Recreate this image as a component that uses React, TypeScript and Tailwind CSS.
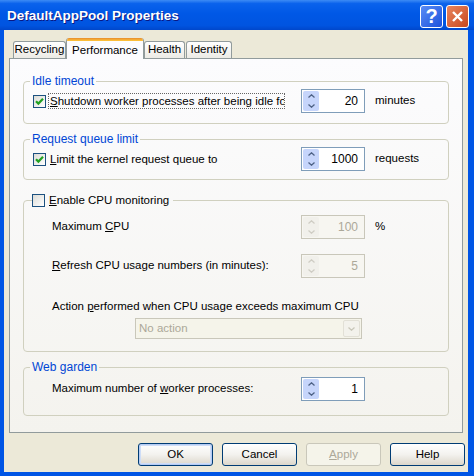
import React from 'react'

const FONT = "font-['Liberation_Sans',Arial,sans-serif]"

function Chevron({ dir, color }: { dir: 'up' | 'down'; color: string }) {
  return (
    <svg width="7" height="4" viewBox="0 0 7 4">
      {dir === 'up'
        ? <path d="M0.5 3.5 L3.5 0.8 L6.5 3.5" stroke={color} strokeWidth="1.3" fill="none" />
        : <path d="M0.5 0.5 L3.5 3.2 L6.5 0.5" stroke={color} strokeWidth="1.3" fill="none" />}
    </svg>
  )
}

function Check({ checked }: { checked?: boolean }) {
  return (
    <span className="w-[13px] h-[13px] shrink-0 border border-[#1C5180] bg-linear-to-br from-[#DCDCD7] to-white flex items-center justify-center">
      {checked && (
        <svg width="9" height="9" viewBox="0 0 9 9">
          <path d="M1 4.2 L3.4 6.6 L8 1.8" stroke="#21A121" strokeWidth="2.2" fill="none" />
        </svg>
      )}
    </span>
  )
}

function Spinner({ value, disabled }: { value: string; disabled?: boolean }) {
  return (
    <div
      className={`w-[64px] h-[24px] shrink-0 border flex ${
        disabled ? 'border-[#C9C7BA] bg-[#F7F6F1]' : 'border-[#7F9DB9] bg-white'
      }`}
    >
      <div className="w-[18px] p-px">
        <div
          className={`h-full rounded-[2px] flex flex-col items-center justify-center gap-[6px] ${
            disabled ? 'bg-[#F1F0EB]' : 'bg-[#C6D5FB]'
          }`}
        >
          <Chevron dir="up" color={disabled ? '#CFCDC4' : '#4D6185'} />
          <Chevron dir="down" color={disabled ? '#CFCDC4' : '#4D6185'} />
        </div>
      </div>
      <div className={`flex-1 self-center text-right pr-[6px] text-[12px] ${disabled ? 'text-[#ACA899]' : 'text-black'}`}>
        {value}
      </div>
    </div>
  )
}

function Group({ legend, className, children }: { legend: React.ReactNode; className?: string; children: React.ReactNode }) {
  return (
    <fieldset className={`border border-[#D0D0BF] rounded-[4px] ${className ?? ''}`}>
      <legend className="ml-[6px] px-[2px] leading-[14px] text-[12px] text-[#0046D5]">{legend}</legend>
      {children}
    </fieldset>
  )
}

function Tab({ label, selected, className }: { label: string; selected?: boolean; className?: string }) {
  if (selected) {
    return (
      <div className={`relative z-10 -mb-px h-[21px] flex flex-col rounded-t-[3px] border-x border-[#919B9C] bg-[#FCFCFE] overflow-hidden ${className ?? ''}`}>
        <div className="h-[3px] bg-linear-to-b from-[#E68B2C] to-[#FFC83C]" />
        <div className="flex-1 flex items-start justify-center pt-[1px]">{label}</div>
      </div>
    )
  }
  return (
    <div className={`h-[17px] rounded-t-[3px] border-x border-t border-[#919B9C] bg-linear-to-b from-white to-[#ECEBE5] flex items-center justify-center ${className ?? ''}`}>
      {label}
    </div>
  )
}

function Button({ children, primary, disabled }: { children: React.ReactNode; primary?: boolean; disabled?: boolean }) {
  return (
    <div
      className={`w-[75px] h-[23px] rounded-[3px] border flex items-center justify-center ${
        disabled
          ? 'border-[#C9C7BA] bg-[#F5F4EA] text-[#ACA899]'
          : 'border-[#003C74] bg-linear-to-b from-white via-[#F3F2EE] to-[#DCD7CB] text-black'
      } ${primary ? 'shadow-[inset_0_0_0_1px_#B6CCF3,inset_0_0_0_2px_#CEDDF7]' : ''}`}
    >
      {children}
    </div>
  )
}

export default function App() {
  return (
    <div className={`${FONT} text-[11.5px] w-[474px] h-[476px] flex flex-col bg-[#0055E5] select-none`}>
      {/* Title bar */}
      <div className="h-[30px] shrink-0 flex items-center bg-[linear-gradient(180deg,#3D8BF5_0%,#0A62EC_12%,#0058E6_45%,#0054E0_85%,#0047CB_100%)]">
        <div className="flex-1 pl-[7px] pt-[2px] text-white font-bold text-[13.5px] [text-shadow:1px_1px_#0A1883]">
          DefaultAppPool Properties
        </div>
        <div className="flex gap-[3px] pr-[5px] pt-[2px]">
          <div className="w-[23px] h-[23px] rounded-[3px] border border-white bg-linear-to-br from-[#5A8CF5] to-[#1C50DC] flex items-center justify-center text-white font-bold text-[20px] leading-none">
            ?
          </div>
          <div className="w-[23px] h-[23px] rounded-[3px] border border-white bg-linear-to-br from-[#E8855E] to-[#C8461A] flex items-center justify-center">
            <svg width="13" height="13" viewBox="0 0 13 13">
              <path d="M2 2 L11 11 M11 2 L2 11" stroke="white" strokeWidth="2.4" />
            </svg>
          </div>
        </div>
      </div>

      {/* Body */}
      <div className="flex-1 ml-[4px] mr-[6px] mb-[4px] bg-[#ECE9D8] flex flex-col pt-[8px] pb-[6px]">
        <div className="px-[5px]">
          <div className="flex items-end h-[20px] pl-[4px]">
            <Tab label="Recycling" className="w-[53px]" />
            <Tab label="Performance" selected className="w-[78px]" />
            <Tab label="Health" className="w-[41px]" />
            <Tab label="Identity" className="ml-[1px] w-[46px]" />
          </div>

          <div className="h-[375px] border border-[#919B9C] bg-linear-to-b from-[#FCFCFE] to-[#F4F3EE] px-[13px] pt-[15px]">
            <Group legend="Idle timeout">
              <div className="flex items-center pl-[9px] pt-[1px] pb-[10px]">
                <div className="w-[268px] flex items-center">
                  <Check checked />
                  <div className="ml-[2px] w-[237px] px-[1px] border border-dotted border-[#666] overflow-hidden whitespace-nowrap leading-[14px]">
                    <span className="underline">S</span>hutdown worker processes after being idle for
                  </div>
                </div>
                <Spinner value="20" />
                <span className="ml-[10px]">minutes</span>
              </div>
            </Group>

            <Group legend="Request queue limit" className="mt-[8px]">
              <div className="flex items-center pl-[9px] pt-[1px] pb-[8px]">
                <div className="w-[268px] flex items-center">
                  <Check checked />
                  <div className="ml-[2px] px-[1px] border border-transparent leading-[14px] whitespace-nowrap">
                    <span className="underline">L</span>imit the kernel request queue to
                  </div>
                </div>
                <Spinner value="1000" />
                <span className="ml-[10px]">requests</span>
              </div>
            </Group>

            <fieldset className="mt-[13px] border border-[#D0D0BF] rounded-[4px]">
              <legend className="ml-[8px] pr-[4px] leading-[14px] flex items-center gap-[4px]">
                <Check />
                <span>
                  <span className="underline">E</span>nable CPU monitoring
                </span>
              </legend>
              <div className="pl-[28px] pt-[8px] pb-[12px]">
                <div className="flex items-center">
                  <div className="w-[249px]">
                    Maximum <span className="underline">C</span>PU
                  </div>
                  <Spinner value="100" disabled />
                  <span className="ml-[10px]">%</span>
                </div>
                <div className="flex items-center mt-[15px]">
                  <div className="w-[249px]">
                    <span className="underline">R</span>efresh CPU usage numbers (in minutes):
                  </div>
                  <Spinner value="5" disabled />
                </div>
                <div className="mt-[21px] leading-[14px]">
                  Action <span className="underline">p</span>erformed when CPU usage exceeds maximum CPU
                </div>
                <div className="mt-[5px] ml-[83px] w-[227px] h-[21px] border border-[#C9C7BA] bg-[#F5F4EA] flex items-center">
                  <div className="flex-1 pl-[3px] text-[#ACA899]">No action</div>
                  <div className="w-[17px] h-[17px] mr-px rounded-[2px] bg-[#F3F2EC] border border-[#E2E0D6] flex items-center justify-center">
                    <Chevron dir="down" color="#C9C7BA" />
                  </div>
                </div>
              </div>
            </fieldset>

            <Group legend="Web garden" className="mt-[8px]">
              <div className="flex items-center pl-[28px] pt-[3px] pb-[14px]">
                <div className="w-[249px]">
                  Maximum number of <span className="underline">w</span>orker processes:
                </div>
                <Spinner value="1" />
              </div>
            </Group>
          </div>
        </div>

        <div className="mt-[10px] flex justify-end gap-[9px] pr-[3px]">
          <Button primary>OK</Button>
          <Button>Cancel</Button>
          <Button disabled>
            <span className="underline">A</span>pply
          </Button>
          <Button>Help</Button>
        </div>
      </div>
    </div>
  )
}
